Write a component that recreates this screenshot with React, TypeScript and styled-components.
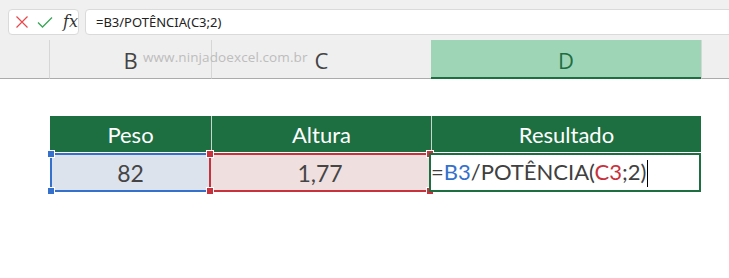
import React from "react";
import styled, { createGlobalStyle } from "styled-components";

const Global = createGlobalStyle`
  html, body { margin: 0; padding: 0; background: #ffffff; }
  body { font-family: "Noto Sans", "Liberation Sans", sans-serif; overflow: hidden; }
`;

const Page = styled.div`
  position: relative;
  width: 729px;
  height: 278px;
  background: #ffffff;
  display: flex;
  flex-direction: column;
`;

const FormulaBar = styled.div`
  height: 40px;
  background: #f0f0f0;
  display: flex;
  align-items: flex-start;
  padding: 9px 0 0 8px;
  box-sizing: border-box;
  gap: 6px;
  overflow: hidden;
`;

const IconBox = styled.div`
  width: 73px;
  height: 26px;
  box-sizing: border-box;
  background: #ffffff;
  border: 1px solid #dadada;
  border-radius: 4px;
  display: flex;
  align-items: center;
  padding-left: 6px;
  gap: 8px;
`;

const Fx = styled.span`
  font-family: "DejaVu Serif", "Liberation Serif", serif;
  font-style: italic;
  font-size: 16px;
  color: #333;
  margin-left: 2px;
  line-height: 1;
`;

const InputBox = styled.div`
  flex: 1;
  min-width: 700px;
  height: 26px;
  box-sizing: border-box;
  background: #ffffff;
  border: 1px solid #dadada;
  border-radius: 4px;
  display: flex;
  align-items: center;
  padding-left: 10px;
  font-family: "Noto Sans", sans-serif;
  font-size: 13px;
  color: #222;
`;

const ColHeaders = styled.div`
  display: grid;
  grid-template-columns: 49px 162px 220px 270px 1fr;
  height: 39px;
  background: #efefef;
`;

const ColHead = styled.div<{ $selected?: boolean; $first?: boolean }>`
  box-sizing: border-box;
  display: flex;
  align-items: center;
  justify-content: center;
  padding-top: 2px;
  font-family: "Open Sans", "Noto Sans", sans-serif;
  font-size: 22px;
  color: ${(p) => (p.$selected ? "#1d6f42" : "#444")};
  background: ${(p) => (p.$selected ? "#9fd5b7" : "transparent")};
  border-bottom: ${(p) => (p.$selected ? "2px solid #1d6f42" : "1px solid #ababab")};
  border-left: ${(p) => (p.$first || p.$selected ? "none" : "1px solid #d6d6d6")};
`;

const Watermark = styled.div`
  position: absolute;
  left: 143px;
  top: 48px;
  font-family: "Open Sans", "Noto Sans", sans-serif;
  font-size: 13.5px;
  color: #bdbdbd;
  letter-spacing: 0.1px;
`;

const Gap = styled.div`
  height: 37px;
`;

const Table = styled.div`
  display: grid;
  grid-template-columns: 50px 161px 220px 270px 1fr;
  grid-template-rows: 36px 40px;
`;

const Empty = styled.div``;

const HeadCell = styled.div<{ $first?: boolean }>`
  background: #1d6f42;
  color: #ffffff;
  display: flex;
  align-items: center;
  justify-content: center;
  font-family: "Lato", "Noto Sans", sans-serif;
  font-size: 22px;
  border-left: ${(p) => (p.$first ? "none" : "1px solid #c9d6ce")};
  box-sizing: border-box;
  padding-top: 1px;
`;

const DataCell = styled.div<{ $bg: string; $border: string; $align?: string; $font?: number }>`
  position: relative;
  background: ${(p) => p.$bg};
  border: 2px solid ${(p) => p.$border};
  margin-top: 1px;
  margin-left: -2px;
  box-sizing: border-box;
  display: flex;
  align-items: center;
  justify-content: ${(p) => p.$align || "center"};
  font-family: "Lato", "Noto Sans", sans-serif;
  font-size: ${(p) => p.$font || 23}px;
  color: #454545;
`;

const Handle = styled.span<{ $c: string; $x: "l" | "r"; $y: "t" | "b" }>`
  position: absolute;
  width: 6px;
  height: 6px;
  background: ${(p) => p.$c};
  border: 1px solid #fff;
  ${(p) => (p.$x === "l" ? "left: -5px;" : "right: -5px;")}
  ${(p) => (p.$y === "t" ? "top: -5px;" : "bottom: -5px;")}
`;

const Formula = styled.span`
  display: inline-block;
  white-space: nowrap;
  color: #404040;
  line-height: 28px;
`;

const Ref = styled.span<{ $c: string }>`
  color: ${(p) => p.$c};
`;

const Caret = styled.span`
  display: inline-block;
  width: 1px;
  height: 27px;
  background: #000;
  margin-left: 1px;
  vertical-align: middle;
`;

const Corners = ({ c }: { c: string }) => (
  <>
    <Handle $c={c} $x="l" $y="t" />
    <Handle $c={c} $x="r" $y="t" />
    <Handle $c={c} $x="l" $y="b" />
    <Handle $c={c} $x="r" $y="b" />
  </>
);

export default function App() {
  return (
    <Page>
      <Global />
      <FormulaBar>
        <IconBox>
          <svg width="14" height="14" viewBox="0 0 14 14">
            <path d="M1.5 1.5 L12.5 12.5 M12.5 1.5 L1.5 12.5" stroke="#e8474b" strokeWidth="1.2" fill="none" />
          </svg>
          <svg width="16" height="14" viewBox="0 0 16 14">
            <path d="M1 7.5 L5.5 12 L15 2.5" stroke="#3aa657" strokeWidth="1.3" fill="none" />
          </svg>
          <Fx>fx</Fx>
        </IconBox>
        <InputBox>=B3/POTÊNCIA(C3;2)</InputBox>
      </FormulaBar>
      <ColHeaders>
        <ColHead $first />
        <ColHead>B</ColHead>
        <ColHead>C</ColHead>
        <ColHead $selected>D</ColHead>
        <ColHead />
      </ColHeaders>
      <Watermark>www.ninjadoexcel.com.br</Watermark>
      <Gap />
      <Table>
        <Empty />
        <HeadCell $first>Peso</HeadCell>
        <HeadCell>Altura</HeadCell>
        <HeadCell>Resultado</HeadCell>
        <Empty />
        <Empty />
        <DataCell $bg="#dce3ed" $border="#3470cc" style={{ marginLeft: 0 }}>
          82
          <Corners c="#3470cc" />
        </DataCell>
        <DataCell $bg="#efdfdf" $border="#c8323c">
          1,77
          <Corners c="#c8323c" />
        </DataCell>
        <DataCell $bg="#ffffff" $border="#1d6f42" $align="flex-start" $font={22}>
          <Formula>
            =<Ref $c="#3470cc">B3</Ref>/POTÊNCIA(<Ref $c="#c8323c">C3</Ref>;2)<Caret />
          </Formula>
        </DataCell>
        <Empty />
      </Table>
    </Page>
  );
}
